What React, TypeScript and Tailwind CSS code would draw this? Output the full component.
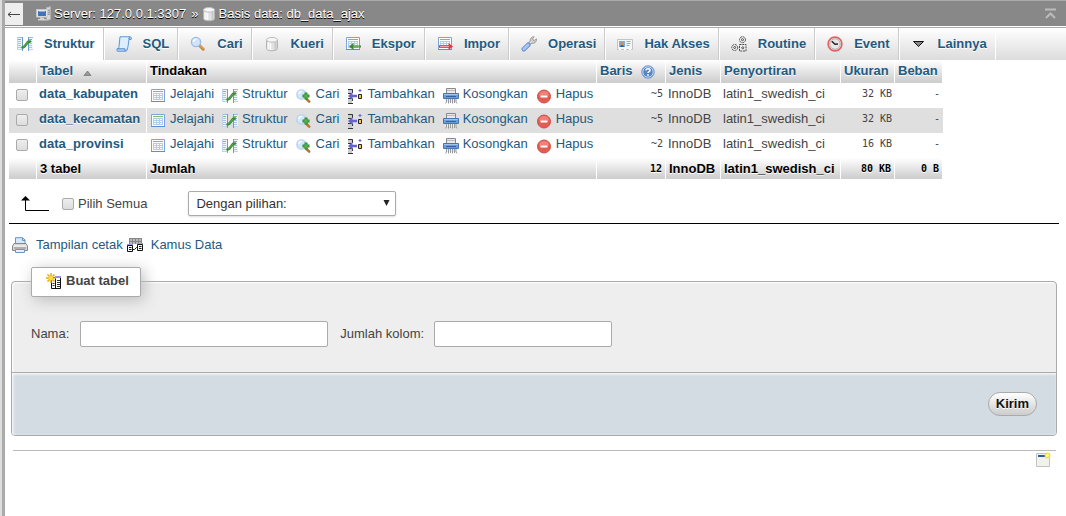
import type { ReactNode } from 'react';

type IconProps = { className?: string };

function Svg({ children, className = '' }: { children: ReactNode; className?: string }) {
  return (
    <svg width="16" height="16" viewBox="0 0 16 16" aria-hidden="true" className={`shrink-0 ${className}`}>
      {children}
    </svg>
  );
}

function StructureIcon({ className }: IconProps) {
  return (
    <Svg className={className}>
      <path d="M0 1h5v13H0z" fill="#f1f5fc" />
      <path d="M11 1h5v13h-5z" fill="#f1f5fc" />
      <path d="M0 1.500h5M11 1.500h5" stroke="#9bb8e4" />
      <path d="M1 3.500h3M12 3.500h3" stroke="#86b874" />
      <path d="M1 5.500h3M1 7.500h3M1 9.500h3M1 11.500h3M12 5.500h3M12 7.500h3M12 9.500h3M12 11.500h3" stroke="#a9c1e6" />
      <path d="M.5 1v13M0 13.500h5M11 13.500h5" stroke="#c3d3ee" />
      <path d="M5.500 1v14M11.500 1v14" stroke="#6f98d3" />
      <path d="M5.500 11.500l2-1 3.500-4.500 2-.5" fill="none" stroke="#3d8b37" strokeWidth="2.600" strokeLinecap="round" />
      <path d="M6 11.200l1.500-1 3.500-4.200" fill="none" stroke="#6fb566" strokeWidth=".7" />
    </Svg>
  );
}

function SqlIcon() {
  return (
    <Svg>
      <path d="M4 .8h10.500q1.300 1 .6 2.700h-2L11.500 13q-.5 2.200-2 2.200H1.300q-.9-1.200 0-2.700h1.500z" fill="#b9d9f7" stroke="#5c93d6" />
      <path d="M4.700 1.500h7.800L11 12.500H3.500z" fill="#dceefd" />
      <path d="M1.500 12.800h7.200q-.2 2 1 2" fill="none" stroke="#4f86cb" />
      <path d="M13 3.500q-.4-1.700 1-2.300" fill="none" stroke="#4f86cb" />
    </Svg>
  );
}

function SearchIcon() {
  return (
    <Svg>
      <path d="M9.500 9.500l3.700 3.700" stroke="#c98337" strokeWidth="3" strokeLinecap="round" />
      <path d="M9.800 9.300l3.400 3.400" stroke="#f0bb72" strokeWidth="1" />
      <circle cx="6" cy="6" r="4.600" fill="#cfe3fb" stroke="#9bbce8" strokeWidth="1.300" />
      <path d="M3.500 6a2.700 2.700 0 0 1 3-2.600" stroke="#fff" fill="none" strokeWidth="1.300" />
    </Svg>
  );
}

function SearchPlusIcon({ className }: IconProps) {
  return (
    <Svg className={className}>
      <path d="M10.500 11l2.700 2.700" stroke="#b87433" strokeWidth="2.600" strokeLinecap="round" />
      <circle cx="5.500" cy="6.500" r="4.700" fill="#d3e7fb" stroke="#b3d0f1" strokeWidth="1.200" />
      <path d="M2.900 6a2.700 2.700 0 0 1 3-2.600" stroke="#fff" fill="none" strokeWidth="1.300" />
      <path d="M10 4.500v7M6.500 8h7" stroke="#2f8a2d" strokeWidth="3" />
      <path d="M10 5.500v5M7.500 8h5" stroke="#68bd5d" />
    </Svg>
  );
}

function DatabaseIcon({ className }: IconProps) {
  return (
    <Svg className={className}>
      <path d="M2.500 4v8.500C2.500 14 5 14.800 8 14.800s5.500-.8 5.500-2.300V4z" fill="#e2e2e2" stroke="#b4b4b4" />
      <path d="M4.500 6v7.500M6.500 6.500v7.500" stroke="#fafafa" strokeWidth="1.500" />
      <path d="M11.500 6v8" stroke="#c8c8c8" strokeWidth="2" />
      <ellipse cx="8" cy="3.800" rx="5.500" ry="2.300" fill="#f7f7f7" stroke="#c0c0c0" />
    </Svg>
  );
}

function SheetIcon({ className, children }: { className?: string; children?: ReactNode }) {
  return (
    <Svg className={className}>
      <path d="M1.500 1.500h13v12h-13z" fill="#fff" stroke="#7da3dc" />
      <path d="M3 3.500h10" stroke="#83ba75" />
      <path d="M3 5.500h10M3 7.500h10M3 9.500h10M3 11.500h10M3.500 5v7M6.500 5v7M9.500 5v7M12.500 5v7" stroke="#b5cbed" />
      <path d="M1 13.500h14" stroke="#5f8ccb" />
      {children}
    </Svg>
  );
}

function ExportIcon() {
  return (
    <SheetIcon>
      <path d="M16 10.500H7" stroke="#3b8a36" strokeWidth="2" />
      <path d="M8.500 7v7L4 10.500z" fill="#3b8a36" />
      <path d="M14.500 10.500H8" stroke="#82c178" strokeWidth=".7" />
    </SheetIcon>
  );
}

function ImportIcon() {
  return (
    <SheetIcon>
      <path d="M2 10.500h10" stroke="#e5393a" strokeWidth="2.600" />
      <path d="M11.500 7v7l4.500-3.500z" fill="#e5393a" />
      <path d="M3 10.500h9" stroke="#ffd0ce" strokeWidth=".7" />
    </SheetIcon>
  );
}

function WrenchIcon() {
  return (
    <Svg>
      <path d="M7 9l4-4" stroke="#979797" strokeWidth="3" />
      <path d="M9.300 6.300q-.9-2.600 1-4.500Q11.800.4 13.200.8L11.700 2.700l.3 1.400 1.500.3 1.900-1.600q.5 2-.9 3.400-1.900 1.900-4 1z" fill="#cfcfcf" stroke="#8d8d8d" strokeWidth=".8" />
      <path d="M7 9l4-4" stroke="#dedede" strokeWidth="1.400" />
      <path d="M2.900 13.100l4.300-4.200" stroke="#6990d3" strokeWidth="4.800" strokeLinecap="round" />
      <path d="M2.900 12.900l4.100-4" stroke="#a9c5f5" strokeWidth="2.800" strokeLinecap="round" />
    </Svg>
  );
}

function CardIcon() {
  return (
    <Svg>
      <path d="M.5 3.500h15v10H.5z" fill="#f6f6f6" stroke="#c4c4c4" />
      <path d="M2 5h6v6H2z" fill="#79aee5" />
      <circle cx="5" cy="7.500" r="1.700" fill="#d88c4b" />
      <path d="M3 11q0-2 2-2t2 2z" fill="#315d98" />
      <path d="M9.500 5.500h4M9.500 7.500h4M9.500 9.500h3" stroke="#8cb2b6" />
      <path d="M2 13.500h2M7 13.500h2M12 13.500h2" stroke="#fff" />
    </Svg>
  );
}

function GearsIcon() {
  return (
    <Svg>
      <g fill="#eee" stroke="#4a4a4a" strokeDasharray="2 .8">
        <circle cx="11.500" cy="3.700" r="3" />
        <circle cx="3.700" cy="11.500" r="3" />
        <path d="M8.500 8.500h6.500v6.500H8.500z" />
      </g>
      <g fill="#fff" stroke="#4a4a4a">
        <circle cx="11.500" cy="3.700" r="1" />
        <circle cx="3.700" cy="11.500" r="1" />
        <circle cx="11.800" cy="11.800" r="1" />
      </g>
    </Svg>
  );
}

function ClockIcon() {
  return (
    <Svg>
      <circle cx="8" cy="8" r="6.900" fill="#fff" stroke="#e36161" strokeWidth="1.600" />
      <circle cx="8" cy="8" r="5.300" fill="#e6e6e6" stroke="#b2aaaa" />
      <path d="M4.800 5.200L8 8.200l3-.2" fill="none" stroke="#222" strokeWidth="1.500" />
    </Svg>
  );
}

function MoreIcon() {
  return (
    <Svg>
      <path d="M2.500 5.500h10L7.500 10.500z" fill="#888" stroke="#111" />
    </Svg>
  );
}

function InsertIcon({ className }: IconProps) {
  return (
    <Svg className={className}>
      <path d="M1 1h5v4H1zM1 11h4v4H1z" fill="#ccc" />
      <path d="M1 1.500h4.500V5M1 5.500h3M1 10.500h4.500V13M1 15.500h5" fill="none" stroke="#333" />
      <path d="M1 8l4.500-4v2.700H10v2.600H5.500V12z" fill="#6663cf" />
      <path d="M11.500 6.500h3v4h-3z" fill="#f8cb42" stroke="#222" />
      <path d="M13 1v3M11.500 2.500h3" stroke="#6663cf" />
    </Svg>
  );
}

function ShredIcon({ className }: IconProps) {
  return (
    <Svg className={className}>
      <path d="M3.500 .5h9V6h-9z" fill="#e9e9e9" stroke="#888" />
      <path d="M4 2.500h8" stroke="#bbb" />
      <path d="M.5 5.500h15v5H.5z" fill="#6b9dd8" stroke="#4675b4" />
      <path d="M1 6.500h14" stroke="#9fc4ee" />
      <path d="M3 8.500h10" stroke="#35619c" />
      <path d="M2.500 11h11v3h-11z" fill="#eee" />
      <path d="M3.500 11v3l-1 1.500M5.500 11v4.500M7.500 11v4M9.500 11v4.500M11.500 11v4M13 11v3l1 1.500" fill="none" stroke="#999" />
    </Svg>
  );
}

function DropIcon({ className }: IconProps) {
  return (
    <Svg className={className}>
      <circle cx="8" cy="8.500" r="6.500" fill="#e35c51" stroke="#c9504a" />
      <path d="M3 7.500a5 4.500 0 0 1 10 0z" fill="#f18b7f" opacity=".8" />
      <path d="M4.500 8.500h7" stroke="#fff" strokeWidth="2" />
    </Svg>
  );
}

function HelpIcon() {
  return (
    <Svg>
      <circle cx="8" cy="8" r="6.300" fill="#5585c4" stroke="#7fa3d2" />
      <circle cx="8" cy="8" r="5.200" fill="none" stroke="#c8dbf4" />
      <path d="M6 6.500q0-1.800 2-1.800t2 1.500q0 1-1.200 1.600-.8.500-.8 1.200" fill="none" stroke="#fff" strokeWidth="1.500" />
      <circle cx="8" cy="11" r=".9" fill="#fff" />
    </Svg>
  );
}

function ServerIcon() {
  return (
    <Svg>
      <path d="M10.500 1.500l4-.8v12.800l-4 1z" fill="#d8d8d8" stroke="#b0b0b0" />
      <path d="M11 4.500l3-.5M11 6.500l3-.5M11 8.500l3-.5" stroke="#888" />
      <path d="M.500 3.500h11v7.500H.5z" fill="#e7e7e7" stroke="#c6c6c6" />
      <path d="M2 5h8v5H2z" fill="#3f74bb" />
      <path d="M3 5.500h6" stroke="#86afe0" />
      <path d="M4 11.500h4v1.500H4zM2 13h8v1.500H2z" fill="#d3d3d3" />
    </Svg>
  );
}

function PrinterIcon() {
  return (
    <Svg>
      <path d="M3.500 7V.700h7L13 3v4" fill="#d5e8fc" stroke="#6793cb" />
      <path d="M10.500 1v2.500H13" fill="none" stroke="#6793cb" />
      <path d="M2 6.500h12l1.500 2.500v4.500H.5V9z" fill="#d6d6d6" stroke="#888" />
      <path d="M1.500 9h13" stroke="#fff" />
      <path d="M3.500 12.500h9V15.500h-9z" fill="#e6f2ff" stroke="#6e96c8" />
      <path d="M2 11h12" stroke="#8b8b8b" />
    </Svg>
  );
}

function DictionaryIcon() {
  return (
    <Svg>
      <path d="M2 1h13v6H2z" fill="#bbb" />
      <path d="M2 1.500h13M2 4.500h13M2.500 1v6M5.500 1v6M8.500 1v6M11.500 1v6M14.500 1v5" stroke="#858585" />
      <path d="M0 7h6v1.500H0zM10 6h6v1.500h-6z" fill="#a09de0" />
      <path d="M.5 8.500h5v6h-5zM10.500 7.500h5v6h-5z" fill="#fff" stroke="#111" />
      <path d="M2 10.500h2.500M2 12.500h2.500M12 9.500h2.500M12 11.500h2.500M6 12.500h1.500l2-2h1" fill="none" stroke="#111" />
    </Svg>
  );
}

function NewTableIcon() {
  return (
    <Svg>
      <path d="M5.500 4.500h9v11h-9z" fill="#fff" stroke="#111" />
      <path d="M9 3h6v2H9z" fill="#9693d8" />
      <path d="M9.500 5v10" stroke="#111" />
      <path d="M11 7.500h3M11 9.500h3M11 11.500h3M11 13.500h3M6.500 10.500h2M6.500 12.500h2" stroke="#333" />
      <path d="M5 0v10M0 5h10M1.500 1.500l7 7M8.500 1.500l-7 7" stroke="#e0ad00" strokeWidth="1.500" />
      <circle cx="5" cy="5" r="2.300" fill="#ffdb36" />
    </Svg>
  );
}

function WindowIcon() {
  return (
    <Svg>
      <path d="M1.500 1.500h13v13h-13z" fill="#f1f1ef" stroke="#c4c4bd" />
      <path d="M3 3h7v2H3z" fill="#2d5d9f" />
      <circle cx="12.500" cy="3.500" r="2.200" fill="#fff89a" stroke="#f0e43c" strokeWidth="1.500" />
    </Svg>
  );
}

const tabs = [
  { label: 'Struktur', Icon: StructureIcon },
  { label: 'SQL', Icon: SqlIcon },
  { label: 'Cari', Icon: SearchIcon },
  { label: 'Kueri', Icon: DatabaseIcon },
  { label: 'Ekspor', Icon: ExportIcon },
  { label: 'Impor', Icon: ImportIcon },
  { label: 'Operasi', Icon: WrenchIcon },
  { label: 'Hak Akses', Icon: CardIcon },
  { label: 'Routine', Icon: GearsIcon },
  { label: 'Event', Icon: ClockIcon },
  { label: 'Lainnya', Icon: MoreIcon },
];

const actions = [
  { label: 'Jelajahi', Icon: SheetIcon },
  { label: 'Struktur', Icon: StructureIcon },
  { label: 'Cari', Icon: SearchPlusIcon },
  { label: 'Tambahkan', Icon: InsertIcon },
  { label: 'Kosongkan', Icon: ShredIcon },
  { label: 'Hapus', Icon: DropIcon },
];

const rows = [
  { name: 'data_kabupaten', count: '~5', size: '32 KB' },
  { name: 'data_kecamatan', count: '~5', size: '32 KB' },
  { name: 'data_provinsi', count: '~2', size: '16 KB' },
];

const link = 'text-[#235a81] hover:underline';
const bar = 'bg-linear-to-b from-white to-[#ccc] border-r border-white px-[3px] text-left font-bold whitespace-nowrap [text-shadow:0_1px_0_#fff]';
const head = `${bar} pb-[2px]`;
const mono = "font-['DejaVu_Sans_Mono',monospace] text-[10px]";
const box = 'block size-3 shrink-0 appearance-none rounded-[2px] border border-[#aaa] bg-linear-to-b from-[#eee] to-[#ddd] checked:bg-[#68a]';
const field = 'h-[26px] rounded-[2px] border border-[#aaa] bg-white px-1.5';

export default function App() {
  return (
    <div className="flex min-h-screen bg-white font-['Liberation_Sans',Arial,sans-serif] text-[13px] leading-4 text-[#444]">
      <div className="w-[5px] shrink-0 border-r-3 border-[#aaa] bg-[#dcdede]" />
      <div className="min-w-0 flex-1 border-t border-[#aaa]">
        <header className="flex h-[25px] items-center bg-[#888] text-white [text-shadow:0_1px_0_#000]">
          <button type="button" aria-label="Sembunyikan panel" className="flex h-[22px] w-[18px] items-center justify-center bg-[#eee]">
            <svg width="14" height="8" viewBox="0 0 14 8" aria-hidden="true">
              <path d="M1 4.500h12M4 2L1 4.500 4 7" fill="none" stroke="#444" />
            </svg>
          </button>
          <nav aria-label="Lokasi" className="ml-[13px] flex items-center">
            <ServerIcon />
            <a href="#server" className="ml-[2px]">Server: 127.0.0.1:3307</a>
            <span className="mr-[2px] ml-[5px]">»</span>
            <DatabaseIcon />
            <a href="#database" className="ml-[2px]">Basis data: db_data_ajax</a>
          </nav>
          <a href="#top" aria-label="Ke atas" className="mr-[9px] ml-auto">
            <svg width="13" height="12" viewBox="0 0 13 12" aria-hidden="true">
              <path d="M1 1.500h11M2 10l4.500-4.500L11 10" fill="none" stroke="#bbb" strokeWidth="2" />
            </svg>
          </a>
        </header>

        <nav aria-label="Menu" className="mt-px flex h-[33px] border-t border-[#aaa] bg-linear-to-b from-white to-[#dcdcdc] font-bold">
          {tabs.map(({ label, Icon }, i) => (
            <a
              key={label}
              href={`#${label}`}
              className={`flex items-center gap-[11px] border-l border-white pr-2 pl-[11px] whitespace-nowrap text-[#235a81] [text-shadow:0_1px_0_#fff] ${
                i === 0 ? 'bg-white' : ''
              } ${i === tabs.length - 1 ? 'border-r border-r-white' : 'border-r border-r-[#ccc]'}`}
            >
              <Icon />
              {label}
            </a>
          ))}
        </nav>

        <main className="pr-[7px] pl-1">
          <table className="w-[934px] table-fixed border-separate border-spacing-0">
            <colgroup>
              <col className="w-7" />
              <col className="w-[110px]" />
              <col className="w-[450px]" />
              <col className="w-[69px]" />
              <col className="w-[55px]" />
              <col className="w-[120px]" />
              <col className="w-[54px]" />
              <col className="w-12" />
            </colgroup>
            <thead>
              <tr className="h-[23px]">
                <td className={head} />
                <th scope="col" className={head}>
                  <a href="#Tabel" className="flex items-center gap-[10px] text-[#235a81]">
                    Tabel
                    <svg width="9" height="6" viewBox="0 0 9 6" aria-hidden="true" className="mt-1">
                      <path d="M1 5.500h7L4.500 1z" fill="#999" stroke="#777" strokeWidth=".8" />
                    </svg>
                  </a>
                </th>
                <th scope="col" className={`${head} text-black`}>Tindakan</th>
                <th scope="col" className={head}>
                  <a href="#Baris" className="flex h-4 items-start gap-[7px] text-[#235a81]">
                    Baris
                    <span className="pt-px">
                      <HelpIcon />
                    </span>
                  </a>
                </th>
                {['Jenis', 'Penyortiran', 'Ukuran', 'Beban'].map((h) => (
                  <th key={h} scope="col" className={head}>
                    <a href={`#${h}`} className="text-[#235a81]">{h}</a>
                  </th>
                ))}
              </tr>
            </thead>
            <tbody>
              {rows.map((r) => (
                <tr key={r.name} className="h-[25px] whitespace-nowrap even:bg-[#dfdfdf]">
                  <td className="pb-px pl-[7px]">
                    <input type="checkbox" aria-label={r.name} className={box} />
                  </td>
                  <th scope="row" className="border-r border-white pb-1 pl-[2px] text-left [text-shadow:0_1px_0_#fff]">
                    <a href={`#${r.name}`} className={link}>{r.name}</a>
                  </th>
                  <td className="pl-[3px]">
                    <div className="flex gap-2">
                      {actions.map(({ label, Icon }) => (
                        <a key={label} href={`#${label}`} className={`flex items-start gap-1 pb-1 ${link}`}>
                          <Icon className="mt-0.5 -mb-0.5" />
                          {label}
                        </a>
                      ))}
                    </div>
                  </td>
                  <td className={`pr-[3px] pb-1 text-right ${mono}`}>{r.count}</td>
                  <td className="pb-1 pl-[2px]">InnoDB</td>
                  <td className="pb-1 pl-[2px]">latin1_swedish_ci</td>
                  <td className={`pr-[3px] pb-1 text-right ${mono}`}>{r.size}</td>
                  <td className={`pr-[3px] pb-1 text-right ${mono}`}>-</td>
                </tr>
              ))}
            </tbody>
            <tfoot>
              <tr className="h-[21px] text-black">
                <td className={bar} />
                <th scope="row" className={bar}>3 tabel</th>
                <td className={bar}>Jumlah</td>
                <td className={bar}><div className={`text-right ${mono}`}>12</div></td>
                <td className={bar}>InnoDB</td>
                <td className={bar}>latin1_swedish_ci</td>
                <td className={bar}><div className={`text-right ${mono}`}>80 KB</div></td>
                <td className={bar}><div className={`text-right ${mono}`}>0 B</div></td>
              </tr>
            </tfoot>
          </table>

          <div className="mt-3 flex items-center border-b border-black pb-[7px] pl-[11px]">
            <svg width="30" height="18" viewBox="0 0 30 18" aria-hidden="true">
              <path d="M5.500 4v11.500H29" fill="none" stroke="#000" />
              <path d="M1 5.500L5.500 1 10 5.500z" />
            </svg>
            <label className="ml-3 flex items-center gap-1">
              <input type="checkbox" className={box} />
              Pilih Semua
            </label>
            <div className="relative ml-[41px] w-[208px]">
              <select
                aria-label="Dengan pilihan"
                className="block h-[25px] w-full appearance-none rounded-[2px] border border-[#aaa] bg-white px-[7px] text-[#333] shadow-[0_1px_2px_#ddd]"
              >
                <option>Dengan pilihan:</option>
              </select>
              <svg width="7" height="7" viewBox="0 0 7 7" aria-hidden="true" className="pointer-events-none absolute top-[9px] right-1.5">
                <path d="M.5 0h6L3.500 6z" fill="#222" />
              </svg>
            </div>
          </div>

          <div className="mt-[13px] flex items-center pl-[3px]">
            <a href="#cetak" className={`flex gap-2 ${link}`}>
              <PrinterIcon />
              Tampilan cetak
            </a>
            <a href="#kamus" className={`ml-1 flex gap-2 ${link}`}>
              <DictionaryIcon />
              Kamus Data
            </a>
          </div>

          <form className="mt-7 mr-[2px] ml-[2px] rounded-[4px] border border-[#aaa] bg-[#eee] shadow-[inset_1px_1px_2px_#fff]">
            <h2 className="-mt-[15px] ml-[19px] flex h-[30px] w-fit items-center gap-1 rounded-[2px] border border-[#aaa] bg-white pr-[11px] pb-[2px] pl-[14px] font-bold shadow-[3px_3px_15px_#bbb]">
              <NewTableIcon />
              Buat tabel
            </h2>
            <div className="flex items-center pt-6 pb-[25px] pl-[19px]">
              <label htmlFor="nama">Nama:</label>
              <input id="nama" type="text" className={`ml-[11px] w-[248px] ${field}`} />
              <label htmlFor="kolom" className="ml-3">Jumlah kolom:</label>
              <input id="kolom" type="text" className={`ml-[10px] w-[178px] ${field}`} />
            </div>
            <div className="flex h-[63px] items-center justify-end rounded-b-[3px] border-t border-[#aaa] bg-[#d3dce3] pr-[19px] shadow-[inset_1px_1px_3px_#fff]">
              <button
                type="button"
                className="h-6 rounded-full border border-[#aaa] bg-linear-to-b from-white to-[#ccc] px-[7px] font-bold text-[#111] [text-shadow:0_1px_0_#fff]"
              >
                Kirim
              </button>
            </div>
          </form>

          <footer className="mt-[14px] mr-[3px] ml-1 flex justify-end border-t border-[#bbb] pt-px pr-[5px]">
            <a href="#jendela" aria-label="Buka jendela baru">
              <WindowIcon />
            </a>
          </footer>
        </main>
      </div>
    </div>
  );
}
